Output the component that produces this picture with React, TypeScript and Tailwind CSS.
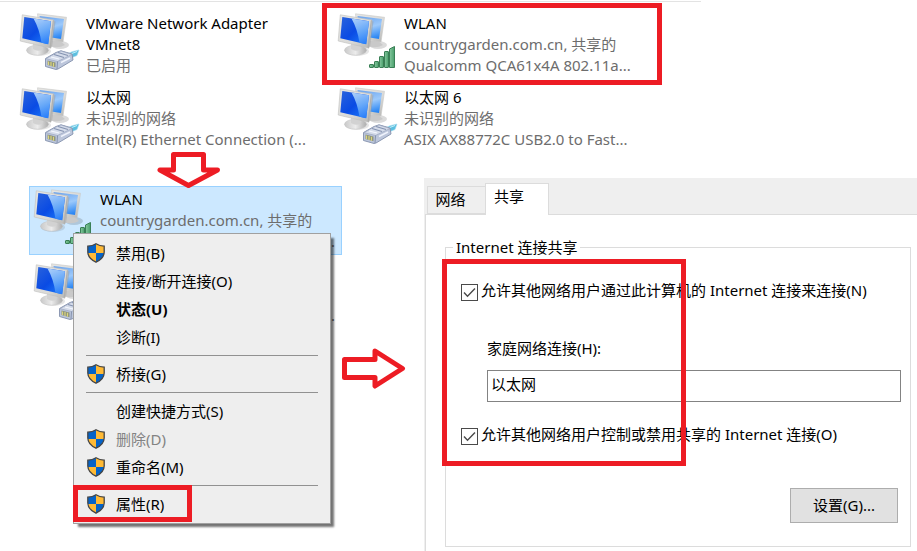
import { useState } from 'react'
import type { ReactNode } from 'react'
import clsx from 'clsx'

type Badge = 'cable' | 'signal'

interface Connection {
  name: string
  lines: string[]
  badge: Badge
}

const CONNECTIONS: Connection[] = [
  { name: 'VMware Network Adapter VMnet8', lines: ['已启用'], badge: 'cable' },
  { name: 'WLAN', lines: ['countrygarden.com.cn, 共享的', 'Qualcomm QCA61x4A 802.11a...'], badge: 'signal' },
  { name: '以太网', lines: ['未识别的网络', 'Intel(R) Ethernet Connection (...'], badge: 'cable' },
  { name: '以太网 6', lines: ['未识别的网络', 'ASIX AX88772C USB2.0 to Fast...'], badge: 'cable' },
]

interface MenuEntry {
  label: string
  shield?: boolean
  bold?: boolean
  disabled?: boolean
  marked?: boolean
}

const MENU: MenuEntry[][] = [
  [
    { label: '禁用(B)', shield: true },
    { label: '连接/断开连接(O)' },
    { label: '状态(U)', bold: true },
    { label: '诊断(I)' },
  ],
  [{ label: '桥接(G)', shield: true }],
  [
    { label: '创建快捷方式(S)' },
    { label: '删除(D)', shield: true, disabled: true },
    { label: '重命名(M)', shield: true },
  ],
  [{ label: '属性(R)', shield: true, marked: true }],
]

function IconGradients() {
  return (
    <svg className="absolute h-0 w-0" aria-hidden="true">
      <defs>
        <linearGradient id="screen" x1="0" y1="0" x2="1" y2="1">
          <stop offset="0" stopColor="#2a63dc" />
          <stop offset="0.5" stopColor="#0a4be4" />
          <stop offset="1" stopColor="#1f83ff" />
        </linearGradient>
        <linearGradient id="glare" x1="0.3" y1="0" x2="0.6" y2="1">
          <stop offset="0" stopColor="#a6cbfa" />
          <stop offset="0.5" stopColor="#6aaaf8" />
          <stop offset="1" stopColor="#2b80fa" />
        </linearGradient>
        <linearGradient id="rear" x1="0.3" y1="0" x2="0.6" y2="1">
          <stop offset="0" stopColor="#6fa6ee" />
          <stop offset="0.5" stopColor="#9cc9fb" />
          <stop offset="1" stopColor="#2a86f4" />
        </linearGradient>
        <linearGradient id="bezel" x1="0" y1="0" x2="1" y2="1">
          <stop offset="0" stopColor="#e6e6e4" />
          <stop offset="0.6" stopColor="#dadad8" />
          <stop offset="1" stopColor="#b4b4b2" />
        </linearGradient>
        <linearGradient id="foot" x1="0" y1="0" x2="1" y2="0">
          <stop offset="0" stopColor="#c9c9c9" />
          <stop offset="0.5" stopColor="#ececec" />
          <stop offset="1" stopColor="#adadad" />
        </linearGradient>
        <linearGradient id="bar" x1="0" y1="0" x2="1" y2="0">
          <stop offset="0" stopColor="#84c79e" />
          <stop offset="1" stopColor="#4a9f6b" />
        </linearGradient>
      </defs>
    </svg>
  )
}

function ConnectionIcon({ badge }: { badge: Badge }) {
  return (
    <svg viewBox="18 12 62 60" className="h-[60px] w-[62px] shrink-0" aria-hidden="true">
      <ellipse cx="60" cy="45" rx="9" ry="4" fill="#000" opacity="0.14" />
      <path d="M49 41 L50 46 Q58 49 65 45 L59 40 Z" fill="#c9c9c9" />
      <path d="M37.500 13.800 L66.500 17.300 L63 42 L40 38.500 Z" fill="url(#bezel)" stroke="#c8c8c6" strokeWidth="0.600" strokeLinejoin="round" />
      <path d="M39.500 16 L64 19 L61 39 L42 36 Z" fill="url(#rear)" />
      <path d="M53.500 21 L55.500 21.500 L52 47 L50 48 Z" fill="#9b9b9b" opacity="0.45" />
      <ellipse cx="39" cy="51.200" rx="12" ry="4.800" fill="#000" opacity="0.1" />
      <ellipse cx="37.500" cy="50.200" rx="11" ry="5" fill="url(#foot)" stroke="#c0c0c0" strokeWidth="0.500" />
      <path d="M33 44 L43 46 L42 50 Q37 52 33 49 Z" fill="#d2d2d2" />
      <path d="M22.300 14.800 L54 20 L50.800 48.200 L20.200 41 Z" fill="url(#bezel)" stroke="#c0c0be" strokeWidth="0.600" strokeLinejoin="round" />
      <path d="M54 20 L50.800 48.200 L49.600 47.500 L52.700 20.800 Z" fill="#b0b0ae" />
      <path d="M24.300 16.900 L51 21.200 L48.200 44.300 L22.300 38.300 Z" fill="url(#screen)" />
      <path d="M33.500 18.400 L51 21.200 L48.200 44.300 L41.500 42.700 Q39.500 29 33.500 18.400 Z" fill="url(#glare)" />
      {badge === 'cable' ? <CableBadge /> : <SignalBadge />}
    </svg>
  )
}

function CableBadge() {
  return (
    <g strokeLinejoin="round">
      <path d="M66 54.500 Q72 51 79 50 L77 55.500 L71 58 Z" fill="#5bbfe0" stroke="#a4d9ec" strokeWidth="0.600" />
      <path d="M69 54.500 L77 51.500" stroke="#c4f0fa" strokeWidth="1" />
      <path d="M45.500 58.500 L56 52.500 L61 50.800 L72 54 L73 60 L58 69 L56 69.500 L45.500 66.500 Z" fill="#bcc6db" stroke="#8391ad" strokeWidth="0.900" />
      <path d="M46 58.700 L57.500 61.500 L72 54.500 L61 51 L56 53 Z" fill="#d5dcea" stroke="#93a0bb" strokeWidth="0.600" />
      <path d="M57.500 61.500 L57 69" stroke="#8592ae" strokeWidth="1" />
      <path d="M54 54.500 L64 57.500 M58 52.500 L68 55.500" stroke="#8492b0" strokeWidth="1.100" />
      <path d="M51 57 L59 59" stroke="#f5f8ff" strokeWidth="1.200" />
      <path d="M61 62.500 L70 58" stroke="#eef2fb" strokeWidth="1.500" />
      <path d="M47.500 60.500 L55.500 62.500 L55.500 67.200 L47.500 65 Z" fill="#8b927f" />
      <path d="M48.500 61.500 v3.500 M51 62 v4 M53.500 62.700 v4" stroke="#dcd67c" strokeWidth="1.200" />
    </g>
  )
}

function SignalBadge() {
  return (
    <g fill="url(#bar)" stroke="#397f55" strokeWidth="1">
      <rect x="51.500" y="64.500" width="4" height="3" rx="0.500" />
      <rect x="56.500" y="61.500" width="4" height="6" rx="0.500" />
      <rect x="61.500" y="56.500" width="4" height="11" rx="0.500" />
      <rect x="66.500" y="51.500" width="4" height="16" rx="0.500" />
      <path d="M71.500 67.500 V49 L76.500 46.500 V67.500 Z" />
    </g>
  )
}

function Shield() {
  return (
    <svg viewBox="0 0 18 20" className="h-5 w-[18px]" aria-hidden="true">
      <clipPath id="shield">
        <path d="M9 .8 Q12.500 3 17.200 3.200 V9 Q17 15.500 9 19.200 Q1 15.500 .8 9 V3.200 Q5.500 3 9 .8 Z" />
      </clipPath>
      <g clipPath="url(#shield)">
        <path d="M0 0 H9 V10 H0 Z M9 10 H18 V20 H9 Z" fill="#0563c8" />
        <path d="M9 0 H18 V10 H9 Z M0 10 H9 V20 H0 Z" fill="#ffba35" />
      </g>
      <path d="M9 .8 Q12.500 3 17.200 3.200 V9 Q17 15.500 9 19.200 Q1 15.500 .8 9 V3.200 Q5.500 3 9 .8 Z" fill="none" stroke="#454545" strokeWidth="1.300" />
    </svg>
  )
}

function Mark({ className }: { className: string }) {
  return <div className={clsx('pointer-events-none absolute border-[5px] border-[#ed1c24]', className)} />
}

function Tile({ badge, selected, children }: { badge: Badge; selected?: boolean; children?: ReactNode }) {
  return (
    <div
      className={clsx(
        'relative flex h-[69px] w-[313px] gap-1.5 border pl-0.5 pt-px',
        selected ? 'border-[#99d1ff] bg-[#cce8ff]' : 'border-transparent',
      )}>
      <ConnectionIcon badge={badge} />
      <div className="min-w-0 flex-1 pt-px text-[#6d6d6d]">{children}</div>
    </div>
  )
}

/** Rest of a truncated line that sticks out behind the context menu. */
function LineTail() {
  return <div className="pr-1.5 text-right">...</div>
}

function ContextMenu() {
  return (
    <div role="menu" className="absolute left-11 top-[47px] w-[258px] border border-[#a0a0a0] bg-[#eeeeee] py-[5px] shadow-[4px_4px_2px_-1px_rgba(0,0,0,0.55)]">
      {MENU.map((group, i) => (
        <div key={group[0].label}>
          {i > 0 && <div role="separator" className="mx-3 my-1 h-px bg-[#919191]" />}
          {group.map(entry => (
            <div key={entry.label} className="relative">
              <button
                role="menuitem"
                disabled={entry.disabled}
                className={clsx(
                  'flex h-7 w-full items-center gap-[11px] pl-[13px] text-left',
                  entry.bold && 'font-bold',
                  entry.disabled ? 'text-[#838383]' : 'text-black',
                )}>
                <span className="w-[18px] shrink-0">{entry.shield && <Shield />}</span>
                {entry.label}
              </button>
              {entry.marked && <Mark className="-left-px -top-[5px] h-[37px] w-[119px]" />}
            </div>
          ))}
        </div>
      ))}
    </div>
  )
}

function CheckOption({ label }: { label: string }) {
  const [checked, setChecked] = useState(true)
  return (
    <label className="relative flex items-end gap-[3px] whitespace-nowrap">
      <input
        type="checkbox"
        checked={checked}
        onChange={e => setChecked(e.target.checked)}
        className="h-[17px] w-[17px] shrink-0 appearance-none border border-[#4a4a4a] bg-white"
      />
      {checked && (
        <svg viewBox="0 0 17 17" className="pointer-events-none absolute bottom-0 left-0 h-[17px] w-[17px]" fill="none" stroke="#4a4a4a" strokeWidth="1.400">
          <path d="M3 8.500 L6.500 12.200 L14 4.500" />
        </svg>
      )}
      {label}
    </label>
  )
}

function SharingPanel() {
  return (
    <section className="relative flex min-w-0 flex-1 flex-col bg-[#efefef]">
      <div role="tablist" className="flex h-9 items-end pl-[3px]">
        <button role="tab" aria-selected="false" className="h-7 w-[58px] border border-r-0 border-[#dcdcdc] pb-0.5 pr-3">
          网络
        </button>
        <button role="tab" aria-selected="true" className="relative -mb-px h-8 w-16 border border-b-0 border-[#dcdcdc] bg-white pb-1.5 pr-4">
          共享
        </button>
      </div>
      <div className="ml-px flex-1 border-l border-t border-[#dcdcdc] bg-white pb-1 pl-[19px] pr-1.5 pt-[22px]">
        <fieldset className="min-w-0 border border-[#dcdcdc]">
          <legend className="ml-[7px] px-[3px]">Internet 连接共享</legend>
          <div className="pb-[23px] pl-[15px] pr-[9px] pt-[22px]">
            <CheckOption label="允许其他网络用户通过此计算机的 Internet 连接来连接(N)" />
            <div className="mt-[37px] pl-[26px]">
              <label htmlFor="home-network">家庭网络连接(H):</label>
              <input
                id="home-network"
                defaultValue="以太网"
                className="mt-[11px] block h-8 w-full border border-[#838383] bg-white px-[3px] pb-1.5"
              />
            </div>
            <div className="mt-[22px]">
              <CheckOption label="允许其他网络用户控制或禁用共享的 Internet 连接(O)" />
            </div>
            <div className="mt-[43px] flex justify-end pr-[3px]">
              <button className="h-[35px] w-[108px] border border-[#adadad] bg-[#e1e1e1]">设置(G)...</button>
            </div>
          </div>
        </fieldset>
      </div>
      <Mark className="left-[18px] top-[81px] h-[207px] w-[244px]" />
    </section>
  )
}

export default function App() {
  const wlan = CONNECTIONS[1]
  return (
    <main className="flex min-h-screen flex-col bg-white font-['Noto_Sans','Noto_Sans_CJK_SC',sans-serif] text-[15px] leading-[21px] text-black">
      <IconGradients />
      <div className="mt-px h-px w-[701px] bg-[#e3e3e3]" />
      <section className="relative grid grid-cols-[313px_313px] gap-[5px] pl-[15px] pt-2">
        {CONNECTIONS.map(connection => (
          <Tile key={connection.name} badge={connection.badge}>
            <div className="max-w-52 text-black">{connection.name}</div>
            {connection.lines.map(line => <div key={line} className="whitespace-nowrap">{line}</div>)}
          </Tile>
        ))}
        <Mark className="left-[322px] top-px h-[82px] w-[340px]" />
      </section>
      <div className="mt-[25px] flex flex-1">
        <section className="relative ml-[29px] flex flex-col gap-[5px] pt-2">
          <Tile badge="signal" selected>
            <div className="text-black">{wlan.name}</div>
            <div className="whitespace-nowrap">{wlan.lines[0]}</div>
            <LineTail />
          </Tile>
          <Tile badge="cable">
            <div className="pt-[42px]"><LineTail /></div>
          </Tile>
          <div className="absolute left-0 top-2">
            <ContextMenu />
          </div>
          <svg viewBox="0 0 64 37" className="absolute -top-[27px] left-32 h-[37px] w-16" fill="white" stroke="#ed1c24" strokeWidth="5" strokeLinejoin="round" aria-hidden="true">
            <path d="M16.500 3.500 H46.500 V19 H60.500 L31.500 34.500 L3 19 H16.500 Z" />
          </svg>
        </section>
        <svg viewBox="0 0 64 42" className="mr-[18px] mt-[169px] h-[42px] w-16 shrink-0" fill="white" stroke="#ed1c24" strokeWidth="5" strokeLinejoin="round" aria-hidden="true">
          <path d="M2.500 12.500 H33 V4 L60.500 21.500 L33 39 V30.500 H2.500 Z" />
        </svg>
        <SharingPanel />
      </div>
    </main>
  )
}
